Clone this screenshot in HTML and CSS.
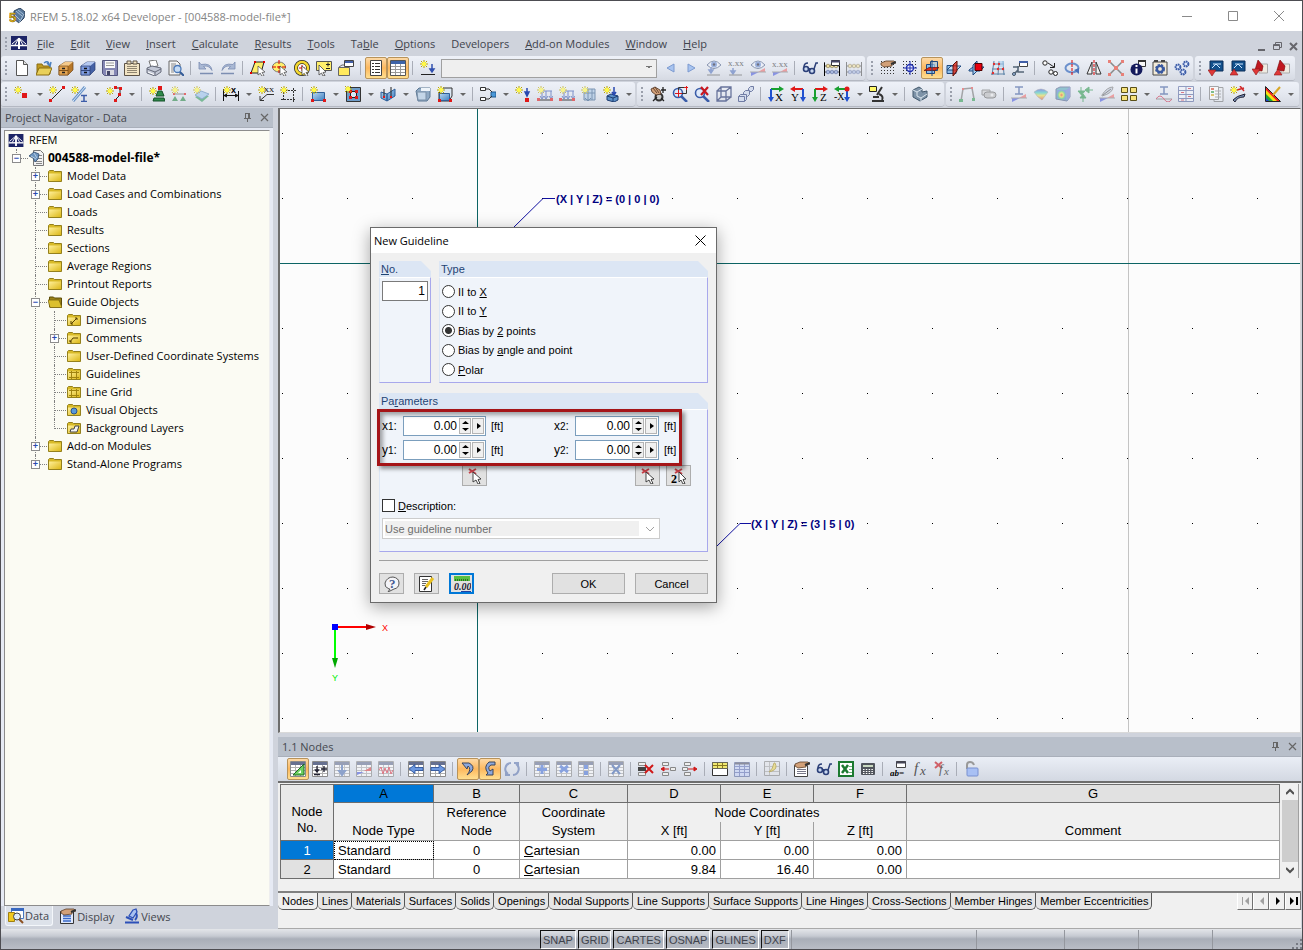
FILE: index.html
```html
<!DOCTYPE html>
<html lang="en">
<head>
  <meta charset="UTF-8">
  <meta name="viewport" content="width=device-width, initial-scale=1.0">
  <title>RFEM 5.18.02 x64 Developer - [004588-model-file*]</title>
  <link rel="stylesheet" href="styles.css">
</head>
<body>
  <svg class="gradients" aria-hidden="true">
    <defs>
      <linearGradient id="gBlue" x1="0" y1="0" x2="1" y2="1"><stop offset="0" stop-color="#b9d8f2"/><stop offset="1" stop-color="#3f7fc0"/></linearGradient>
      <linearGradient id="gFolder" x1="0" y1="0" x2="1" y2="1"><stop offset="0" stop-color="#fff09a"/><stop offset="1" stop-color="#dcb818"/></linearGradient>
      <linearGradient id="gRain" x1="0" y1="0" x2="0" y2="1"><stop offset="0" stop-color="#4a5ad8"/><stop offset=".35" stop-color="#4ccfc0"/><stop offset=".6" stop-color="#e8e050"/><stop offset="1" stop-color="#e85040"/></linearGradient>
      <radialGradient id="gHot"><stop offset="0" stop-color="#f04030"/><stop offset=".4" stop-color="#f0e040"/><stop offset=".75" stop-color="#50c878"/><stop offset="1" stop-color="#5a80d8"/></radialGradient>
    </defs>
  </svg>
  <!-- Icon sprite -->
  <svg class="sprite" aria-hidden="true">
    <symbol id="star" viewBox="0 0 16 16"><path d="M4 0v8M0 4h8M1 1l6 6M7 1L1 7" stroke="#b9a400"/><circle cx="4" cy="4" r="2.300" fill="#fff94a"/></symbol>
    <symbol id="rfem" viewBox="0 0 16 14"><path d="M0 0h16v14H0z" fill="#1c2466"/><path d="M1 8L8 2l7 6M8 2L4 9M8 2l4 7" fill="none" stroke="#fff"/><path d="M0 9.500h16" stroke="#fff" stroke-width="1.500"/><path d="M8 2v11" stroke="#fff" stroke-width="2"/></symbol>
    <symbol id="app" viewBox="0 0 16 16"><path d="M5 3l6-3 5 4-1 6-5 5-5-4z" fill="#58799d" stroke="#2d4360"/><path d="M7 3l6 5M9 2l5 4M5 6l6 6M10 15l5-9" stroke="#a9c1d8"/><text x="0" y="14" font-size="13" font-weight="bold" font-family="Liberation Sans" fill="#f0c020" stroke="#6a5200" stroke-width=".5">5</text></symbol>
    <symbol id="new" viewBox="0 0 16 16"><path d="M2.500.5h7l4 4v11h-11z" fill="#fff" stroke="#555"/><path d="M9.500.5v4h4" fill="#ddd" stroke="#555"/></symbol>
    <symbol id="open" viewBox="0 0 16 16"><path d="M1 4h5l1 2h7v8H1z" fill="#c09a20" stroke="#8a6d10"/><path d="M3 8h13l-3 7H0z" fill="#e9d05a" stroke="#8a6d10"/><path d="M8 3q4-3 5 1M11 3l3 3 1-4" fill="none" stroke="#4a7fc0" stroke-width="1.500"/></symbol>
    <symbol id="cabo" viewBox="0 0 16 16"><path d="M1 6l6-4h8v8l-5 5H1z" fill="#b77728" stroke="#6e4414" stroke-width=".7"/><path d="M1 6h9l5-4H7z" fill="#f4ca8c"/><path d="M1 6h9v4.500H1zM1 10.500h9V15H1z" fill="#e2a452" stroke="#7a4c16" stroke-width=".7"/><path d="M4 8.500h3M4 12.500h3" stroke="#222" stroke-width="1.500"/></symbol>
    <symbol id="cabb" viewBox="0 0 16 16"><path d="M1 6l6-4h8v8l-5 5H1z" fill="#4460a4" stroke="#2a3e74" stroke-width=".7"/><path d="M1 6h9l5-4H7z" fill="#b4c8f0"/><path d="M1 6h9v4.500H1zM1 10.500h9V15H1z" fill="#7c9ade" stroke="#2a3e74" stroke-width=".7"/><path d="M4 8.500h3M4 12.500h3" stroke="#111" stroke-width="1.500"/></symbol>
    <symbol id="save" viewBox="0 0 16 16"><path d="M.5.5h15v15h-13l-2-2z" fill="#8587b4" stroke="#55577f"/><path d="M3 1h10v7H3z" fill="#fafafa"/><path d="M4 3h8M4 5.500h8" stroke="#999"/><path d="M4 10h8v5H4z" fill="#d9d9e2"/><path d="M5 11h3v4H5z" fill="#444668"/></symbol>
    <symbol id="clip" viewBox="0 0 16 16"><path d="M.5 3.500h15v12H.5z" fill="#f2e4c4" stroke="#5c5246"/><path d="M3 1h4v3H3zM9 1h4v3H9z" fill="#f2e4c4" stroke="#5c5246"/><path d="M3 6.500h10M3 8.500h10M3 10.500h10M3 12.500h10" stroke="#8f8470"/></symbol>
    <symbol id="print" viewBox="0 0 16 16"><path d="M3 1l7-1 2 6-7 1z" fill="#fff" stroke="#777"/><path d="M1 8l5-2 9 2v4l-6 4-8-3z" fill="#c3c8d6" stroke="#666b7a"/><path d="M1 9l8 3 6-3M9 12v3" fill="none" stroke="#666b7a"/><path d="M2 12l6 2.500" stroke="#fff"/></symbol>
    <symbol id="preview" viewBox="0 0 16 16"><path d="M1 1h8l3 3v11H1z" fill="#f6f6f6" stroke="#666"/><path d="M3 4h5M3 6h7M3 8h4M3 10h3M3 12h3" stroke="#888"/><circle cx="9.500" cy="9" r="3.500" fill="#c6dcf5" stroke="#4a78b8" stroke-width="1.300"/><path d="M12 12l4 4" stroke="#345c98" stroke-width="2"/></symbol>
    <symbol id="undo" viewBox="0 0 16 16"><path d="M1 2v7h7L5.500 6.500q5-2 8.500 4-1-8-11-6z" fill="#a9b8d4" stroke="#7c8eb2" stroke-width=".8"/><path d="M2 13.500h13" stroke="#7c8eb2" stroke-width="1.500"/></symbol>
    <symbol id="redo" viewBox="0 0 16 16"><path d="M15 2v7H8l2.500-2.500q-5-2-8.500 4 1-8 11-6z" fill="#a9b8d4" stroke="#7c8eb2" stroke-width=".8"/><path d="M1 13.500h13" stroke="#7c8eb2" stroke-width="1.500"/></symbol>
    <symbol id="cursor" viewBox="0 0 16 16"><path d="M8 6l7 6-3 .5 2 3-2 .8-1.700-3L8 15z" fill="#fff" stroke="#444" stroke-width=".7"/></symbol>
    <symbol id="selpoly" viewBox="0 0 16 16"><path d="M5 2h9l-3 11H1z" fill="#ffef6a" stroke="#222"/><path d="M4 1h2v2H4zM13 1h2v2h-2zM0 12h2v2H0z" fill="#e00000"/><use href="#cursor"/></symbol>
    <symbol id="selell" viewBox="0 0 16 16"><ellipse cx="7" cy="7" rx="6.500" ry="5" fill="#ffef6a" stroke="#777"/><path d="M7 0v4M7 6v3M0 7h4M5 7h4M10 7h4M7 10v3" stroke="#e00000"/><use href="#cursor"/></symbol>
    <symbol id="selring" viewBox="0 0 16 16"><circle cx="8" cy="8" r="6" fill="#fff" stroke="#222" stroke-width="4"/><circle cx="8" cy="8" r="6" fill="none" stroke="#f5d930" stroke-width="2.500"/><path d="M8 5v6M5 8h6" stroke="#e00000"/><use href="#cursor"/></symbol>
    <symbol id="selrect" viewBox="0 0 16 16"><path d="M.5 1.500h15v9H.5z" fill="#ffef6a" stroke="#555"/><path d="M10 4.500h4M12 2.500v4M10 8.500h4" stroke="#222"/><path d="M3 5l7 7-3 .5 2 3-2 .5-1.500-3L3 15z" fill="#fff" stroke="#444" stroke-width=".8"/></symbol>
    <symbol id="selwin" viewBox="0 0 16 16"><path d="M.5 7.500h11v8H.5z" fill="#ffe95e" stroke="#666"/><path d="M1 7l3-2h3" stroke="#666" fill="none"/><path d="M6.500.5h9v6h-9z" fill="#fff" stroke="#444"/><path d="M7 2h8" stroke="#4260a8" stroke-width="2"/></symbol>
    <symbol id="list" viewBox="0 0 16 16"><path d="M2.500.5h11v15h-11z" fill="#fff" stroke="#444"/><path d="M4 3.500h2M4 6.500h2M4 9.500h2M4 12.500h2M7 3.500h5M7 6.500h5M7 9.500h5M7 12.500h5" stroke="#333"/></symbol>
    <symbol id="table" viewBox="0 0 16 16"><path d="M.5.5h15v15H.5z" fill="#fff" stroke="#555"/><path d="M1 1h14v3H1z" fill="#3d63a8"/><path d="M1 6.500h14M1 9.500h14M1 12.500h14M5.500 4v11M10.500 4v11" stroke="#999"/></symbol>
    <symbol id="starload" viewBox="0 0 16 16"><use href="#star"/><path d="M12 4v7M10 9l2 3 2-3z" stroke="#3050b0" stroke-width="1.500" fill="#3050b0"/><path d="M1 14.500h14" stroke="#222"/></symbol>
    <symbol id="prev" viewBox="0 0 16 16"><path d="M12 4v8L5 8z" fill="#a8c4f0" stroke="#7c9ad0"/></symbol>
    <symbol id="next" viewBox="0 0 16 16"><path d="M4 4v8l7-4z" fill="#a8c4f0" stroke="#7c9ad0"/></symbol>
    <symbol id="eye" viewBox="0 0 16 16"><path d="M1 5q7-8 14 0-7 7-14 0z" fill="#eef2fa" stroke="#4c5e84"/><circle cx="8" cy="4.500" r="3" fill="#6a8cd0"/><circle cx="8" cy="4.500" r="1.200" fill="#223"/></symbol>
    <symbol id="eyeload" viewBox="0 0 16 16"><use href="#eye"/><path d="M5 7v5M3 10l2 3 2-3z" fill="#5a78c0" stroke="#5a78c0" stroke-width="1.500"/><path d="M1 15h13" stroke="#666"/></symbol>
    <symbol id="diag" viewBox="0 0 16 16"><path d="M1 16v-4h8z" fill="#5060e0"/><path d="M8 12l7-4v4z" fill="#f07070"/><path d="M0 12h16" stroke="#888"/></symbol>
    <symbol id="eyediag" viewBox="0 0 16 16"><use href="#eye"/><use href="#diag"/></symbol>
    <symbol id="xxload" viewBox="0 0 16 16"><text x="0" y="6" font-size="9" fill="#333" font-family="Liberation Serif">x.xx</text><path d="M5 8v5M3 11l2 3 2-3z" fill="#5a78c0" stroke="#5a78c0" stroke-width="1.500"/><path d="M1 15h13" stroke="#666"/></symbol>
    <symbol id="xxdiag" viewBox="0 0 16 16"><text x="0" y="7" font-size="9" fill="#333" font-family="Liberation Serif">x.xx</text><use href="#diag"/></symbol>
    <symbol id="glasses" viewBox="0 0 16 16"><circle cx="4" cy="9" r="2.500" fill="#c9d8f0" stroke="#2b3f78" stroke-width="1.600"/><circle cx="10" cy="11" r="2.500" fill="#c9d8f0" stroke="#2b3f78" stroke-width="1.600"/><path d="M2 7q0-4 4-4M6 9q2-1 2 1M12 9l2-6 2 0" fill="none" stroke="#2b3f78" stroke-width="1.500"/></symbol>
    <symbol id="abacus" viewBox="0 0 16 16"><path d="M.5 2v14M15.500 2v14M1 6h14M1 12h14" stroke="#555"/><g fill="#a8b8e0" stroke="#5a6ca0" stroke-width=".6"><circle cx="4" cy="12" r="1.800"/><circle cx="8" cy="12" r="1.800"/><circle cx="12" cy="12" r="1.800"/></g><g fill="#f0e0a0" stroke="#807040" stroke-width=".6"><circle cx="4" cy="6" r="1.800"/><circle cx="8" cy="6" r="1.800"/><circle cx="12" cy="6" r="1.800"/></g></symbol>
    <symbol id="abacuswin" viewBox="0 0 16 16"><use href="#abacus"/><path d="M.5 3v13M15.500 6v10" stroke="#000"/><path d="M7.500.5h8v5h-8z" fill="#fff" stroke="#333"/><path d="M7 1.500h9" stroke="#446" stroke-width="2"/></symbol>
    <symbol id="dots" viewBox="0 0 16 16"><path d="M1 1.500h15M1 4.500h15M1 7.500h15M1 10.500h15M1 13.500h15" stroke="#333" stroke-dasharray="1 2"/></symbol>
    <symbol id="hand" viewBox="0 0 16 16"><path d="M1 3l5-2 8 0 2 2-4 1 0 2-8 1-3-2z" fill="#d2a078" stroke="#5c3c24" stroke-width=".8"/><path d="M11 4l5-2" stroke="#333" stroke-width="2"/></symbol>
    <symbol id="handgrid" viewBox="0 0 16 16"><use href="#dots"/><use href="#hand"/></symbol>
    <symbol id="snap" viewBox="0 0 16 16"><use href="#dots"/><circle cx="8" cy="8" r="3.500" fill="#eef" stroke="#2030b0" stroke-width="1.400"/><path d="M8 1v14M1 8h14" stroke="#2030b0"/></symbol>
    <symbol id="wpa" viewBox="0 0 16 16"><path d="M2.500 4.500h8v9h-8z" fill="#8cbce8" stroke="#1f4a80"/><path d="M6.500 1.500h7v9h-7z" fill="#a8d0f0" fill-opacity=".7" stroke="#1f4a80"/><path d="M0 10.500l5-3h10l-4 3z" fill="#e02818" stroke="#601008" stroke-width=".7"/><path d="M8 0v16" stroke="#1f4a80"/></symbol>
    <symbol id="wpb" viewBox="0 0 16 16"><path d="M1 5.500h9v8H1z" fill="#8cbce8" stroke="#1f4a80"/><path d="M1 10l4-4h10l-4 4z" fill="#c8e2f8" stroke="#1f4a80"/><path d="M7 5l4-4v10l-4 5z" fill="#e02818" fill-opacity=".8" stroke="#601008"/></symbol>
    <symbol id="wpc" viewBox="0 0 16 16"><path d="M1 10l4-3h11l-4 4H1z" fill="#8cbce8" stroke="#1f4a80"/><path d="M5 5l4-4v10l-4 4z" fill="#a8d0f0" stroke="#1f4a80"/><path d="M7 3.500h7v7H7z" fill="#e80010" stroke="#500"/></symbol>
    <symbol id="redgrid" viewBox="0 0 16 16"><path d="M4 1L2 15M9 1L8 15M13 1l1 14M3 4h11M2 9h12M1 14h14" stroke="#5c84a8"/><path d="M8 1h6v6H8z" fill="#a8d0f0" opacity=".6"/><g fill="#e03030"><circle cx="4" cy="4" r="1.200"/><circle cx="9" cy="4" r="1.200"/><circle cx="8" cy="9" r="1.200"/><circle cx="13" cy="9" r="1.200"/><circle cx="3" cy="13" r="1.200"/></g></symbol>
    <symbol id="wrench" viewBox="0 0 16 16"><path d="M1 15l5-5M1 7h6M6 6v6h6" stroke="#567" fill="none" stroke-width="1.600"/><circle cx="2" cy="14" r="1.500" fill="#9ab4dc" stroke="#456"/><path d="M7.500 1.500h8v5h-8z" fill="#fff" stroke="#444"/><path d="M7 2h9" stroke="#4260a8" stroke-width="2"/></symbol>
    <symbol id="movenode" viewBox="0 0 16 16"><circle cx="3" cy="3" r="2.200" fill="#fff" stroke="#222"/><circle cx="9" cy="12" r="2.200" fill="#fff" stroke="#222"/><circle cx="13.500" cy="13.500" r="2" fill="#fff" stroke="#222"/><path d="M6 3l6 4M8 7.500h4.500V3" fill="none" stroke="#222"/></symbol>
    <symbol id="rotate" viewBox="0 0 16 16"><ellipse cx="8" cy="8" rx="6.500" ry="4.500" fill="none" stroke="#6b90cc" stroke-width="2"/><path d="M10 10l5 4 0-6z" fill="#4a70b8"/><path d="M8 0v16" stroke="#e00000" stroke-dasharray="3 1"/></symbol>
    <symbol id="mirror" viewBox="0 0 16 16"><path d="M6 2v12H1zM10 2v12h5z" fill="#f2f2f2" stroke="#333"/><path d="M8 0v16" stroke="#e00000" stroke-dasharray="3 1"/></symbol>
    <symbol id="scale" viewBox="0 0 16 16"><path d="M1 1l14 14M15 1L1 15" stroke="#888" stroke-width="1.500"/><path d="M0 0h3v3H0zM13 0h3v3h-3zM0 13h3v3H0zM13 13h3v3h-3zM6 6h4v4H6z" fill="#e88078"/></symbol>
    <symbol id="info" viewBox="0 0 16 16"><path d="M8.500.5h7v6h-7z" fill="#f8f8f8" stroke="#333"/><path d="M8 1h8" stroke="#333" stroke-width="2"/><circle cx="6.500" cy="9.500" r="6" fill="#141a5c"/><path d="M6.500 5v2M6.500 8.500v5" stroke="#fff" stroke-width="2"/></symbol>
    <symbol id="gearwin" viewBox="0 0 16 16"><path d="M1 2h14v13H1z" fill="#f2ead8" stroke="#444"/><path d="M2 1h4M9 1h4" stroke="#444" stroke-width="2"/><circle cx="8" cy="9" r="3.500" fill="none" stroke="#3858a0" stroke-width="3" stroke-dasharray="2 .8"/><circle cx="8" cy="9" r="3" fill="none" stroke="#3858a0" stroke-width="2"/></symbol>
    <symbol id="gears" viewBox="0 0 16 16"><g fill="#dfe8fa" stroke="#3c5ca8" stroke-width="2"><circle cx="4" cy="7" r="2.400" stroke-dasharray="1.500 .5"/><circle cx="12" cy="4" r="2.400" stroke-dasharray="1.500 .5"/><circle cx="9" cy="12" r="2.400" stroke-dasharray="1.500 .5"/></g></symbol>
    <symbol id="picdown" viewBox="0 0 16 16"><path d="M2 1h13v10H2z" fill="#12508c" stroke="#0a2c58"/><path d="M4 8l4-4 4 4M5 4h8" stroke="#cfe6ff" fill="none"/><path d="M0 10h8l-4 6z" fill="#e03838" stroke="#8c1818" stroke-width=".6"/></symbol>
    <symbol id="picup" viewBox="0 0 16 16"><path d="M2 1h13v10H2z" fill="#12508c" stroke="#0a2c58"/><path d="M4 8l4-4 4 4M5 4h8" stroke="#cfe6ff" fill="none"/><path d="M0 15h8l-4-6z" fill="#e03838" stroke="#8c1818" stroke-width=".6"/></symbol>
    <symbol id="pdfdown" viewBox="0 0 16 16"><path d="M7 4h8.500v9H7z" fill="#efebe2" stroke="#aaa"/><path d="M6 0l5 6-1 5-7-1z" fill="#c01820" stroke="#700" stroke-width=".6"/><path d="M0 9h8l-4 6z" fill="#e03838" stroke="#8c1818" stroke-width=".6"/></symbol>
    <symbol id="pdfup" viewBox="0 0 16 16"><path d="M7 4h8.500v9H7z" fill="#efebe2" stroke="#aaa"/><path d="M6 0l5 6-1 5-7-1z" fill="#c01820" stroke="#700" stroke-width=".6"/><path d="M0 15h8l-4-6z" fill="#e03838" stroke="#8c1818" stroke-width=".6"/></symbol>
    <symbol id="stnode" viewBox="0 0 16 16"><use href="#star"/><path d="M8 7h5v5H8z" fill="#e01818"/></symbol>
    <symbol id="stline" viewBox="0 0 16 16"><use href="#star"/><path d="M2 14L14 2" stroke="#222"/><path d="M0 13h3v3H0zM13 0h3v3h-3z" fill="#e01818"/></symbol>
    <symbol id="stmember" viewBox="0 0 16 16"><path d="M2 15L14 1" stroke="#6a94c8" stroke-width="3"/><path d="M2 15L14 1" stroke="#d8e8f8"/><use href="#star"/><path d="M10 9.500h6M10 15.500h6M13 9v6" stroke="#3c5ca8" stroke-width="1.500"/></symbol>
    <symbol id="stpoly" viewBox="0 0 16 16"><path d="M9 2h5v7l-5 5" stroke="#222" fill="none"/><use href="#star" y="1"/><path d="M8 0h3v3H8zM13 1h3v3h-3zM12 7h3v3h-3zM8 13h3v3H8z" fill="#e01818"/></symbol>
    <symbol id="stsup" viewBox="0 0 16 16"><use href="#star" y="1"/><path d="M9 0h4v4H9z" fill="#e01818"/><path d="M9 5h4l2 5H7zM5 12h10l1 3H4z" fill="#2e8a4a" stroke="#155028"/></symbol>
    <symbol id="stsups" viewBox="0 0 16 16"><path d="M3 8h12" stroke="#666"/><path d="M2 7h2v2H2zM13 7h2v2h-2z" fill="#e01818"/><path d="M4 10l3 5H1zM12 10l3 5H9z" fill="#2e8a4a"/><use href="#star"/></symbol>
    <symbol id="stfound" viewBox="0 0 16 16"><path d="M2 11l6-3 8 2-7 6z" fill="#38a060"/><path d="M2 9l6-4 8 3-7 5z" fill="#9cc4ec" stroke="#5a88b8"/><use href="#star"/></symbol>
    <symbol id="dim" viewBox="0 0 16 16"><path d="M.5 3v12M15.500 5v10M1 9.500h14M4 8L1 9.500 4 11M12 8l3 1.500-3 1.500" stroke="#111" fill="#111"/><use href="#star"/><text x="8" y="7" font-size="9" font-weight="bold" font-family="Liberation Sans">x</text></symbol>
    <symbol id="xxnote" viewBox="0 0 16 16"><use href="#star"/><text x="6" y="6" font-size="7" font-family="Liberation Serif">XX</text><path d="M16 8.500H9l-7 6M2 10v4.500h4" stroke="#333" fill="none"/></symbol>
    <symbol id="stgrid" viewBox="0 0 16 16"><path d="M3.500 3v12M13.500 2v14M2 4.500h14M1 13.500h14" stroke="#333" stroke-dasharray="2 1"/><use href="#star"/></symbol>
    <symbol id="stsurf" viewBox="0 0 16 16"><path d="M2.500 6.500h12v8h-12z" fill="url(#gBlue)" stroke="#2f5f98"/><path d="M1 13h3v3H1zM13 13h3v3h-3z" fill="#e01818"/><use href="#star"/></symbol>
    <symbol id="stopening" viewBox="0 0 16 16"><path d="M1.500 1.500h14v14h-14z" fill="#6e9cc8" stroke="#333"/><path d="M5.500 5.500h6v6h-6z" fill="#d8e8f4" stroke="#222"/><path d="M4 4h3v3H4zM10 4h3v3h-3zM4 10h3v3H4zM10 10h3v3h-3z" fill="#e01818"/><use href="#star" x="-1" y="-1"/></symbol>
    <symbol id="intersect" viewBox="0 0 16 16"><path d="M1 6l6 2v7l-6-3zM7 8l8-5v7l-8 5z" fill="url(#gBlue)" stroke="#2f5f98"/><path d="M4 3v9M11 1v10" stroke="#222"/><path d="M3 10h2v2H3zM10 10h2v2h-2z" fill="#e01818"/></symbol>
    <symbol id="solid" viewBox="0 0 16 16"><path d="M1 5l3-3h11v9l-3 4H3z" fill="#8fa9c4" stroke="#5c7894"/><path d="M7 4l8 0M2 6h9v8H3z" fill="#c4d6e8" stroke="#7a90a8"/><path d="M6 2l9 0v3H6z" fill="#eef4fa"/></symbol>
    <symbol id="stsolid" viewBox="0 0 16 16"><path d="M2 7l4-5h9v8l-3 5H2z" fill="#dce8f4" stroke="#333"/><path d="M2.500 7.500h10v7h-10z" fill="url(#gBlue)" stroke="#2f5f98"/><path d="M1 13h3v3H1zM12 13h3v3h-3z" fill="#e01818"/><use href="#star"/></symbol>
    <symbol id="connect" viewBox="0 0 16 16"><path d="M.5 1.500h5v3h-5zM.5 11.500h5v3h-5z" fill="#fff" stroke="#333"/><path d="M11 6h5v5h-5z" fill="#4a98d8" stroke="#205a90"/><path d="M6 3h3l3 3M6 13h3l3-3" fill="none" stroke="#333"/></symbol>
    <symbol id="stnload" viewBox="0 0 16 16"><use href="#star"/><path d="M12 2v6M10 6l2 4 2-4z" fill="#2848b0" stroke="#2848b0" stroke-width="1.500"/><path d="M10 12h4v4h-4z" fill="#e01818"/></symbol>
    <symbol id="stmload" viewBox="0 0 16 16"><path d="M4 5h11M5 5v7M9 5v7M14 5v7M3 10l2 3 2-3M7 10l2 3 2-3M12 10l2 3 2-3" fill="none" stroke="#3858b0"/><path d="M1 14h14" stroke="#333" stroke-width="1.500"/><path d="M0 12h3v3H0zM13 12h3v3h-3z" fill="#e01818"/><use href="#star"/></symbol>
    <symbol id="stsload" viewBox="0 0 16 16"><path d="M3 3h11v11H3z" fill="#a9c6e4" stroke="#38608c"/><path d="M3 7h11M7 3v11M11 3v11M4 12l3 3 3-3" fill="none" stroke="#38608c"/><use href="#star"/></symbol>
    <symbol id="stvload" viewBox="0 0 16 16"><path d="M4 10l4-2 7 2v4l-4 2-7-2z" fill="#5c90c8" stroke="#1c3c70"/><path d="M4 10l6 2 5-2M10 12v4" fill="none" stroke="#1c3c70"/><path d="M11 1v7M9 6l2 3 2-3" stroke="#2848b0" stroke-width="1.500" fill="none"/><use href="#star"/></symbol>
    <symbol id="handgear" viewBox="0 0 16 16"><circle cx="9" cy="11" r="3.500" fill="#ccc" stroke="#333" stroke-width="2"/><path d="M11 4h5M13 1v6M3 15l4-4M14 15l-3-3" stroke="#222" stroke-width="1.300"/><path d="M1 3l4-2 5 3 1 4-5 1-4-3z" fill="#d2a078" stroke="#4c3020" stroke-width=".8"/><path d="M3 2l4 5M5 1l4 6" stroke="#4c3020" stroke-width=".8"/></symbol>
    <symbol id="mag" viewBox="0 0 16 16"><circle cx="6" cy="7" r="4.500" fill="#dfeafa" stroke="#3a5ca8" stroke-width="1.600"/><path d="M9 10l6 6" stroke="#3a5ca8" stroke-width="2.500"/></symbol>
    <symbol id="zoomwin" viewBox="0 0 16 16"><use href="#mag"/><path d="M6.500 1.500h8v6h-8z" fill="none" stroke="#333"/><path d="M6.500 4v7M3 7.500h7M14.500 0v4M12 1.500h4" stroke="#e01818"/></symbol>
    <symbol id="zoomx" viewBox="0 0 16 16"><use href="#mag"/><path d="M7 1l7 8M14 1L7 9" stroke="#c81820" stroke-width="2.200"/></symbol>
    <symbol id="cube" viewBox="0 0 16 16"><path d="M1 5h9v10H1zM5 1h10v10H5zM1 5l4-4M10 5l5-4M10 15l5-4M1 15l4-4" fill="none" stroke="#68749c" stroke-width="1.300"/></symbol>
    <symbol id="cubes" viewBox="0 0 16 16"><g fill="#d4dced" stroke="#707ca4"><path d="M10.500 2.500l2-2h3v3l-2 2h-3z"/><path d="M5.500 6.500l2-2h4v4l-2 2h-4z"/><path d="M.5 10.500l2-2h6v5l-2 2h-6z"/><path d="M.5 10.500h6v5" fill="none"/></g></symbol>
    <symbol id="vx" viewBox="0 0 16 16"><path d="M3 3h9" stroke="#18a030" stroke-width="2"/><path d="M11 0l5 3-5 3z" fill="#18a030"/><path d="M3 3v9" stroke="#2050d0" stroke-width="2"/><path d="M0 11l3 5 3-5z" fill="#2050d0"/><text x="7" y="15" font-size="11" font-family="Liberation Serif">X</text></symbol>
    <symbol id="vy" viewBox="0 0 16 16"><path d="M4 3h9" stroke="#e01818" stroke-width="2"/><path d="M5 0L0 3l5 3z" fill="#e01818"/><path d="M13 3v9" stroke="#2050d0" stroke-width="2"/><path d="M10 11l3 5 3-5z" fill="#2050d0"/><text x="1" y="15" font-size="11" font-family="Liberation Serif">Y</text></symbol>
    <symbol id="vz" viewBox="0 0 16 16"><path d="M3 3h9" stroke="#e01818" stroke-width="2"/><path d="M11 0l5 3-5 3z" fill="#e01818"/><path d="M3 3v9" stroke="#18a030" stroke-width="2"/><path d="M0 11l3 5 3-5z" fill="#18a030"/><text x="8" y="15" font-size="11" font-family="Liberation Serif">Z</text></symbol>
    <symbol id="vmx" viewBox="0 0 16 16"><path d="M4 3h9" stroke="#18a030" stroke-width="2"/><path d="M5 0L0 3l5 3z" fill="#18a030"/><path d="M13 3v9" stroke="#2050d0" stroke-width="2"/><path d="M10 11l3 5 3-5z" fill="#2050d0"/><circle cx="13" cy="3" r="2.500" fill="#e01818"/><text x="0" y="14" font-size="10" font-family="Liberation Serif">-X</text></symbol>
    <symbol id="micro" viewBox="0 0 16 16"><path d="M.5.5h7v5h-7z" fill="#fff868" stroke="#222"/><path d="M13 1l-5 8M10 8q5 2 3 6M3 15h12M4 11h6" stroke="#333" stroke-width="2" fill="none"/></symbol>
    <symbol id="block" viewBox="0 0 16 16"><path d="M1 4l6-3 3 2v3l5-1v6l-7 4-7-4z" fill="#7e93a8" stroke="#42586c"/><path d="M1 4l4 2v4l4 2 6-4M5 6l5-3M9 12v3" fill="none" stroke="#dce6ee"/></symbol>
    <symbol id="frame" viewBox="0 0 16 16"><path d="M2 15L4 3l9-1 2 11" fill="none" stroke="#777" stroke-width="1.500"/><path d="M3 2h2v2H3zM12 1h2v2h-2z" fill="#e05050"/><path d="M0 13h4v3H0zM13 12h3v3h-3z" fill="#38a058"/></symbol>
    <symbol id="cam" viewBox="0 0 16 16"><path d="M1 4h8v5H1z" fill="#d0d0d0" stroke="#777"/><rect x="3" y="6" width="12" height="6" rx="3" fill="#bbb" stroke="#666"/><circle cx="11" cy="9" r="1.500" fill="#eee"/></symbol>
    <symbol id="ibeam" viewBox="0 0 16 16"><path d="M4 1h8M4 8h8M8 1v7" stroke="#4460a0" stroke-width="1.500"/><use href="#diag"/></symbol>
    <symbol id="contour" viewBox="0 0 16 16"><path d="M1 6q7-6 14 0l-6 8q-5-3-8-8z" fill="url(#gRain)" stroke="#888" stroke-width=".5"/></symbol>
    <symbol id="contcube" viewBox="0 0 16 16"><path d="M1 3l4-2h10v10l-3 4-11-2z" fill="#58a8b8" stroke="#50608c"/><path d="M2 4h9v10l-9-2z" fill="url(#gHot)"/><path d="M11 4l4-3v10l-3 4z" fill="#6c80d0"/></symbol>
    <symbol id="garrows" viewBox="0 0 16 16"><path d="M4 1v5M1 5h7l-3.500 4zM11 4h5M12 1L8 4l4 3zM6 16v-4M3 12l3-4 3 4z" fill="#309850" stroke="#309850"/></symbol>
    <symbol id="wedge" viewBox="0 0 16 16"><path d="M3 9Q8 1 14 1q0 6-11 9z" fill="#c4ccdc" stroke="#777"/><path d="M4 9l8-6" stroke="#555"/><use href="#diag"/></symbol>
    <symbol id="four" viewBox="0 0 16 16"><path d="M.5 1.500h6v5h-6zM9.500 1.500h6v5h-6zM.5 9.500h6v5h-6zM9.500 9.500h6v5h-6z" fill="#f6e27c" stroke="#5a5018"/></symbol>
    <symbol id="isin" viewBox="0 0 16 16"><path d="M4 1h8M4 8h8M8 1v7" stroke="#4460a0" stroke-width="1.500"/><path d="M0 13h16" stroke="#777"/><path d="M0 13q4-6 8 0t8 0" fill="none" stroke="#d03050"/></symbol>
    <symbol id="tables" viewBox="0 0 16 16"><path d="M.5.5h15v15H.5z" fill="#f2f4fa" stroke="#5868a0"/><path d="M1 4.500h14M1 8.500h14M1 12.500h14M8 1v14" stroke="#5868a0"/><path d="M3 6.500h3M10 10.500h3M3 14h3M10 2.500h3" stroke="#d03040"/></symbol>
    <symbol id="report" viewBox="0 0 16 16"><path d="M6 1.500h9v14H6z" fill="#e8ecf2" stroke="#777"/><path d="M1.500.5h9v13h-9z" fill="#fff" stroke="#777"/><path d="M3 3h3" stroke="#e04828" stroke-width="2"/><path d="M3 6h3" stroke="#38a048" stroke-width="2"/><path d="M3 9h3" stroke="#e0b020" stroke-width="2"/><path d="M7 5h6M7 8h6M7 11h6" stroke="#888"/></symbol>
    <symbol id="wand" viewBox="0 0 16 16"><path d="M3 14q3-4 12-6l-1 3q-7 0-9 5z" fill="#7890b8" stroke="#223"/><path d="M7 4l7-2M10 0l4 5" stroke="#d02828" stroke-width="1.500"/><use href="#star"/></symbol>
    <symbol id="colors" viewBox="0 0 16 16"><path d="M1 1l14 14H1z" fill="#f02020"/><path d="M1 4l11 11H1z" fill="#f8e010"/><path d="M1 8l7 7H1z" fill="#20a838"/><path d="M1 12l3 3H1z" fill="#2040d0"/><path d="M.5.5v15h15z" fill="none" stroke="#222"/><path d="M15 1l-7 8" stroke="#d8a828" stroke-width="2"/></symbol>
    <!-- table panel -->
    <symbol id="grid" viewBox="0 0 16 16"><path d="M.5.5h15v15H.5z" fill="#fff" stroke="#8a8a8a"/><path d="M1 6.500h14M1 9.500h14M1 12.500h14M5.500 4v11M10.500 4v11" stroke="#b0b0b0"/><path d="M1 1h14v3H1z" fill="#667090"/></symbol>
    <symbol id="gtri" viewBox="0 0 16 16"><use href="#grid"/><path d="M3 14L14 3v11z" fill="#6ed060" stroke="#1c6a20"/><path d="M8 12l3-3v3z" fill="#fff"/></symbol>
    <symbol id="gadd" viewBox="0 0 16 16"><use href="#grid"/><path d="M5 5v6M3.500 9L5 11l1.500-2zM2 13.500h6M9 8h6M12 5v6" fill="#223" stroke="#223" stroke-width="1.300"/></symbol>
    <symbol id="gdown" viewBox="0 0 16 16"><use href="#grid"/><path d="M8 4v6M5 10l3 4 3-4z" fill="#5a7ab8" stroke="#5a7ab8" stroke-width="2"/></symbol>
    <symbol id="gdiag" viewBox="0 0 16 16"><use href="#grid"/><path d="M1 11h7l-7 3z" fill="#5060e0"/><path d="M8 10l7-4v4z" fill="#e04848"/></symbol>
    <symbol id="gwave" viewBox="0 0 16 16"><use href="#grid"/><path d="M1 9l2-3 2 7 2-6 2 5 2-6 2 7 2-4" fill="none" stroke="#e03040"/></symbol>
    <symbol id="gleft" viewBox="0 0 16 16"><use href="#grid"/><path d="M15 6.500H7v-3L1 8l6 4.500v-3h8z" fill="#6c98e0" stroke="#244c98" stroke-width=".8"/></symbol>
    <symbol id="gright" viewBox="0 0 16 16"><use href="#grid"/><path d="M1 6.500h8v-3L15 8l-6 4.500v-3H1z" fill="#6c98e0" stroke="#244c98" stroke-width=".8"/></symbol>
    <symbol id="retr" viewBox="0 0 16 16"><path d="M2 2h7q6 3 3 8l-5 4q5-6 1-9l-1 3z" fill="#8ca8dc" stroke="#3c4458"/></symbol>
    <symbol id="retl" viewBox="0 0 16 16"><path d="M13 1H7Q1 6 6 12l-2 2h7V8L8 10Q5 6 9 4h4z" fill="#8ca8dc" stroke="#3c4458"/></symbol>
    <symbol id="sync" viewBox="0 0 16 16"><path d="M7 2a6 6 0 0 0-3 11M9 14a6 6 0 0 0 3-11M2 10v4h4M14 6V2h-4" fill="none" stroke="#6078b0" stroke-width="2"/></symbol>
    <symbol id="gplus" viewBox="0 0 16 16"><use href="#grid"/><path d="M3 8.500h10M8 4v9" stroke="#5078d8" stroke-width="3"/></symbol>
    <symbol id="gmul" viewBox="0 0 16 16"><use href="#grid"/><path d="M4 5l8 6M12 5l-8 6" stroke="#5078d8" stroke-width="3"/></symbol>
    <symbol id="gdiv" viewBox="0 0 16 16"><use href="#grid"/><path d="M8 4v4M8 10v4" stroke="#5078d8" stroke-width="4"/></symbol>
    <symbol id="gx" viewBox="0 0 16 16"><use href="#grid"/><path d="M4 4l8 9M12 4l-8 9" stroke="#4468b0" stroke-width="2"/></symbol>
    <symbol id="rowx" viewBox="0 0 16 16"><path d="M.5 1.500h7v3h-7zM.5 11.500h7v3h-7z" fill="#eee" stroke="#888"/><path d="M0 8h8" stroke="#444" stroke-width="4"/><path d="M7 4l8 8M15 4l-8 8" stroke="#d01818" stroke-width="2"/></symbol>
    <symbol id="rowl" viewBox="0 0 16 16"><path d="M2.500 1.500h6v3h-6zM2.500 11.500h6v3h-6zM10.500 6.500h5v3h-5z" fill="#eee" stroke="#888"/><path d="M9 8H3M4 6L1 8l3 2z" fill="#d01818" stroke="#d01818"/></symbol>
    <symbol id="rowr" viewBox="0 0 16 16"><path d="M2.500 1.500h6v3h-6zM2.500 11.500h6v3h-6zM.5 6.500h5v3h-5z" fill="#eee" stroke="#888"/><path d="M6 8h7M12 6l3 2-3 2z" fill="#d01818" stroke="#d01818"/></symbol>
    <symbol id="ytab" viewBox="0 0 16 16"><path d="M.5 1.500h15v13H.5z" fill="#fff" stroke="#333"/><path d="M.5 1.500h15v6H.5z" fill="#f0e870" stroke="#665"/><path d="M1 4.500h14M5.500 2v5M10.500 2v5" stroke="#887820"/></symbol>
    <symbol id="btab" viewBox="0 0 16 16"><path d="M.5 1.500h15v14H.5z" fill="#c8d4f8" stroke="#5c6ca0"/><path d="M1 5.500h14M1 8.500h14M1 11.500h14M5.500 2v13M10.500 2v13" stroke="#6474b8"/><path d="M1 2.500h14" stroke="#556" stroke-width="2"/></symbol>
    <symbol id="note" viewBox="0 0 16 16"><path d="M.5.5h15v14H.5z" fill="#e4e6ea" stroke="#888"/><path d="M5.500 1v13M1 5.500h14M1 10.500h14" stroke="#aaa"/><path d="M11 2q3 6-3 8l-3 1q4-3 5-9z" fill="#ecd858" stroke="#a89020"/></symbol>
    <symbol id="handlist" viewBox="0 0 16 16"><path d="M.5 4.500h13v11H.5z" fill="#fff" stroke="#444"/><path d="M3 8.500h9M3 10.500h9M3 12.500h9" stroke="#778"/><use href="#hand"/></symbol>
    <symbol id="excel" viewBox="0 0 16 16"><path d="M1 1h14v14H1z" fill="#fff" stroke="#1c7a30" stroke-width="2"/><path d="M4 4l6 8M10 4l-6 8" stroke="#1c7a30" stroke-width="2.500"/><path d="M11 5.500h3M11 8.500h3M11 11.500h3" stroke="#6cb078"/></symbol>
    <symbol id="calc" viewBox="0 0 16 16"><rect x="1" y="2" width="14" height="12" rx="1" fill="#50545c"/><path d="M3 4h10v2H3z" fill="#c8d8c0"/><path d="M3 8.500h10M3 10.500h10M3 12.500h10" stroke="#fff" stroke-dasharray="1.500 1.300"/></symbol>
    <symbol id="abeq" viewBox="0 0 16 16"><path d="M6.500.5h9v6h-9z" fill="#fff" stroke="#444"/><path d="M6 1.500h10" stroke="#445" stroke-width="2"/><text x="0" y="15" font-size="9" font-style="italic" font-weight="bold" font-family="Liberation Serif">ab=</text></symbol>
    <symbol id="fx" viewBox="0 0 16 16"><text x="2" y="12" font-size="15" font-style="italic" font-family="Liberation Serif" fill="#555">f</text><text x="8" y="14" font-size="13" font-style="italic" font-family="Liberation Serif" fill="#555">x</text></symbol>
    <symbol id="fxx" viewBox="0 0 16 16"><path d="M1 1l7 6M8 1L1 7" stroke="#d06068" stroke-width="2"/><text x="5" y="12" font-size="13" font-style="italic" font-family="Liberation Serif" fill="#666">f</text><text x="10" y="14" font-size="11" font-style="italic" font-family="Liberation Serif" fill="#666">x</text></symbol>
    <symbol id="lock" viewBox="0 0 16 16"><path d="M3 8V4q0-3 3-3t4 3" fill="none" stroke="#999" stroke-width="2"/><rect x="3" y="7" width="11" height="8" rx="1" fill="#a8c0f4" stroke="#7890d0"/></symbol>
    <!-- navigator -->
    <symbol id="folder" viewBox="0 0 14 14"><path d="M.5 2.500l1-1h4l1 1h7v10H.5z" fill="#d8ba28" stroke="#94801c"/><path d="M1 4.500h12V12H1z" fill="url(#gFolder)"/></symbol>
    <symbol id="folderopen" viewBox="0 0 14 14"><path d="M1.500 2h4l1 1h7v9h-12z" fill="#9a8218" stroke="#5c4c08"/><path d="M0 5h11l3 7.500H2z" fill="#dcc030" stroke="#7a6410" stroke-width=".8"/></symbol>
    <symbol id="fdim" viewBox="0 0 14 14"><use href="#folder"/><path d="M4 11l6-6M4 8v3h2M8 5h2v2" fill="none" stroke="#553f00"/></symbol>
    <symbol id="fcom" viewBox="0 0 14 14"><use href="#folder"/><path d="M3 11l3-4h5M3 9v2h2" fill="none" stroke="#553f00"/></symbol>
    <symbol id="fgrid" viewBox="0 0 14 14"><use href="#folder"/><path d="M4.500 4v8M9.500 4v8M2 5.500h10M2 10.500h10" stroke="#a08410"/></symbol>
    <symbol id="fvis" viewBox="0 0 14 14"><use href="#folder"/><circle cx="7" cy="8" r="3" fill="#5a9ad8" stroke="#28508c"/></symbol>
    <symbol id="fback" viewBox="0 0 14 14"><use href="#folder"/><path d="M3 11l1-3h3l1-3h4l-2 6z" fill="#f2f2f2" stroke="#444"/></symbol>
    <symbol id="model" viewBox="0 0 16 16"><path d="M4.500.5h7l3 3v12h-10z" fill="#f2f2f2" stroke="#777"/><path d="M8 5.500h5M8 8.500h5M7 11.500h6M7 13.500h6" stroke="#888"/><path d="M0 6l5-4 5 2-1 5-3 3-2-4z" fill="#6c94c0" stroke="#2d4a6c" stroke-width=".8"/><path d="M2 6l5 3M5 3l3 5" stroke="#b4cce0"/></symbol>
    <symbol id="navdata" viewBox="0 0 16 16"><path d="M3.500 1.500h12v9h-12z" fill="#fff" stroke="#4878c0"/><path d="M3 1.500h13" stroke="#3868c0" stroke-width="3"/><path d="M.5 4.500h6v9h-6z" fill="#f0c820" stroke="#a08010"/><circle cx="9" cy="8.500" r="3.500" fill="#e0ecfa" stroke="#444"/><path d="M11 11l4 4" stroke="#8c5020" stroke-width="2"/></symbol>
    <symbol id="navdisp" viewBox="0 0 16 16"><path d="M.5 3.500h13v12H.5z" fill="#dfe8fc" stroke="#333"/><path d="M3 8h8M3 10.500h8M3 13h8" stroke="#3868c8" stroke-width="1.300"/><use href="#hand"/></symbol>
    <symbol id="navview" viewBox="0 0 16 16"><path d="M9 2l3-1 1 3-4 6-4-2z" fill="#a8c0f0" stroke="#2c50b8" stroke-width="1.300"/><path d="M12 5q2 4-1 7M2 9l7 3M1 14.500h14" fill="none" stroke="#2c50b8" stroke-width="2"/></symbol>
    <symbol id="pin" viewBox="0 0 9 9"><path d="M2 .5h5M2.500.5v5M5.500.5v5M6.500.5v5M1 5.500h7M4.500 6v3" stroke="#666" fill="none"/></symbol>
    <symbol id="close" viewBox="0 0 9 9"><path d="M1 1l7 7M8 1L1 8" stroke="#666" stroke-width="1.200"/></symbol>
    <!-- dialog -->
    <symbol id="pick" viewBox="0 0 16 16"><path d="M2 1l7 5M9 1L2 5" stroke="#c84048" stroke-width="2"/><path d="M6 4l8 7-3 .5 2 4-2 .5-2-4-3 2z" fill="#fff" stroke="#333" stroke-width=".9"/></symbol>
    <symbol id="pick2" viewBox="0 0 16 16"><path d="M4 1l7 5M11 1L4 5" stroke="#c84048" stroke-width="2"/><path d="M8 4l7 7-3 .5 2 4-2 .5-2-4-2 2z" fill="#fff" stroke="#333" stroke-width=".9"/><text x="0" y="15" font-size="12" font-weight="bold" font-family="Liberation Serif">2</text></symbol>
    <symbol id="help" viewBox="0 0 16 16"><path d="M5 13q-5-2-4-6 2-6 8-6 6 1 6 6 0 5-5 6l-6 3 2-3z" fill="#f4f4f8" stroke="#555"/><text x="5" y="12" font-size="13" font-weight="bold" font-family="Liberation Serif" fill="#445a90">?</text></symbol>
    <symbol id="edit" viewBox="0 0 16 16"><path d="M.5.5h12v15H.5z" fill="#fff" stroke="#333"/><path d="M3 3.500h6M3 5.500h6M3 7.500h4M3 9.500h3" stroke="#666"/><path d="M14 2l-7 9" stroke="#e8c020" stroke-width="3"/><path d="M7 11l-2 3" stroke="#222" stroke-width="1.500"/></symbol>
    <symbol id="units" viewBox="0 0 18 16"><path d="M1 0h16v5H1z" fill="#58c040"/><path d="M2.500 5V3M4.500 5V3M6.500 5V3M8.500 5V3M10.500 5V3M12.500 5V3M14.500 5V3" stroke="#2c7020"/><text x="1" y="14" font-size="10" font-style="italic" font-weight="bold" font-family="Liberation Serif" fill="#223">0.00</text><path d="M8 15.500h10" stroke="#2040a0"/></symbol>
  </svg>

  <div class="app">
    <header class="titlebar">
      <svg class="ico"><use href="#app"/></svg>
      <h1>RFEM 5.18.02 x64 Developer - [004588-model-file*]</h1>
      <div class="win-buttons">
        <button aria-label="Minimize"><svg viewBox="0 0 10 10"><path d="M0 5.500h10"/></svg></button>
        <button aria-label="Maximize"><svg viewBox="0 0 10 10"><path d="M.5.5h9v9h-9z"/></svg></button>
        <button aria-label="Close"><svg viewBox="0 0 10 10"><path d="M0 0l10 10M10 0L0 10"/></svg></button>
      </div>
    </header>

    <nav class="menubar">
      <span class="grip"></span>
      <svg class="ico"><use href="#rfem"/></svg>
      <a href="#"><u>F</u>ile</a>
      <a href="#"><u>E</u>dit</a>
      <a href="#"><u>V</u>iew</a>
      <a href="#"><u>I</u>nsert</a>
      <a href="#"><u>C</u>alculate</a>
      <a href="#"><u>R</u>esults</a>
      <a href="#"><u>T</u>ools</a>
      <a href="#">Ta<u>b</u>le</a>
      <a href="#"><u>O</u>ptions</a>
      <a href="#">Developers</a>
      <a href="#"><u>A</u>dd-on Modules</a>
      <a href="#"><u>W</u>indow</a>
      <a href="#"><u>H</u>elp</a>
      <div class="mdi-buttons">
        <button aria-label="Minimize document"><svg viewBox="0 0 9 9"><path d="M1 8h7"/></svg></button>
        <button aria-label="Restore document"><svg viewBox="0 0 9 9"><path d="M2.500 2V.5h6v5H7M.5 2.500h6v5h-6zM0 3.500h7"/></svg></button>
        <button aria-label="Close document"><svg viewBox="0 0 9 9"><path d="M1 1l7 7M8 1L1 8"/></svg></button>
      </div>
    </nav>

    <div class="toolrow">
      <div class="toolbar">
        <span class="grip"></span>
        <button class="tool" title="New"><svg><use href="#new"/></svg></button>
        <button class="tool" title="Open"><svg><use href="#open"/></svg></button>
        <button class="tool" title="Project Manager"><svg><use href="#cabo"/></svg></button>
        <button class="tool" title="Block Manager"><svg><use href="#cabb"/></svg></button>
        <button class="tool" title="Save"><svg><use href="#save"/></svg></button>
        <button class="tool" title="Report"><svg><use href="#clip"/></svg></button>
        <button class="tool" title="Print"><svg><use href="#print"/></svg></button>
        <button class="tool" title="Preview"><svg><use href="#preview"/></svg></button>
        <span class="sep"></span>
        <button class="tool" title="Undo"><svg><use href="#undo"/></svg></button>
        <button class="tool" title="Redo"><svg><use href="#redo"/></svg></button>
        <span class="sep"></span>
        <button class="tool" title="Select by Rhomboid"><svg><use href="#selpoly"/></svg></button>
        <button class="tool" title="Select by Ellipse"><svg><use href="#selell"/></svg></button>
        <button class="tool" title="Select by Annulus"><svg><use href="#selring"/></svg></button>
        <button class="tool" title="Add to Selection"><svg><use href="#selrect"/></svg></button>
        <button class="tool" title="Special Selection"><svg><use href="#selwin"/></svg></button>
        <span class="sep"></span>
        <button class="tool on" title="Navigator"><svg><use href="#list"/></svg></button>
        <button class="tool on" title="Tables"><svg><use href="#table"/></svg></button>
        <span class="sep"></span>
        <button class="tool" title="New Load Case"><svg><use href="#starload"/></svg></button>
        <select class="case-select" aria-label="Load case"><option></option></select>
        <button class="tool" title="Previous"><svg><use href="#prev"/></svg></button>
        <button class="tool" title="Next"><svg><use href="#next"/></svg></button>
        <button class="tool off" title="Show Loads"><svg><use href="#eyeload"/></svg></button>
        <button class="tool off" title="Show Load Values"><svg><use href="#xxload"/></svg></button>
        <button class="tool off" title="Show Results"><svg><use href="#eyediag"/></svg></button>
        <button class="tool off" title="Show Result Values"><svg><use href="#xxdiag"/></svg></button>
        <span class="sep"></span>
        <button class="tool" title="Check"><svg><use href="#glasses"/></svg></button>
        <button class="tool" title="Calculation Parameters"><svg><use href="#abacuswin"/></svg></button>
        <button class="tool off" title="Calculate All"><svg><use href="#abacus"/></svg></button>
      </div>
      <div class="toolbar">
        <span class="grip"></span>
        <button class="tool" title="Grid Settings"><svg><use href="#handgrid"/></svg></button>
        <button class="tool" title="Snap"><svg><use href="#snap"/></svg></button>
        <button class="tool on" title="Work Plane XY"><svg><use href="#wpa"/></svg></button>
        <button class="tool" title="Work Plane YZ"><svg><use href="#wpb"/></svg></button>
        <button class="tool" title="Work Plane XZ"><svg><use href="#wpc"/></svg></button>
        <button class="tool" title="Mesh"><svg><use href="#redgrid"/></svg></button>
        <button class="tool" title="Coordinate System"><svg><use href="#wrench"/></svg></button>
        <span class="sep"></span>
        <button class="tool" title="Move"><svg><use href="#movenode"/></svg></button>
        <button class="tool" title="Rotate"><svg><use href="#rotate"/></svg></button>
        <button class="tool" title="Mirror"><svg><use href="#mirror"/></svg></button>
        <button class="tool" title="Scale"><svg><use href="#scale"/></svg></button>
        <button class="tool" title="Info"><svg><use href="#info"/></svg></button>
        <button class="tool" title="Settings"><svg><use href="#gearwin"/></svg></button>
        <button class="tool" title="Modules"><svg><use href="#gears"/></svg></button>
      </div>
      <div class="toolbar">
        <span class="grip"></span>
        <button class="tool" title="Import"><svg><use href="#picdown"/></svg></button>
        <button class="tool" title="Export"><svg><use href="#picup"/></svg></button>
        <button class="tool" title="Import File"><svg><use href="#pdfdown"/></svg></button>
        <button class="tool" title="Export File"><svg><use href="#pdfup"/></svg></button>
      </div>
    </div>

    <div class="toolrow">
      <div class="toolbar">
        <span class="grip"></span>
        <button class="tool drop" title="New Node"><svg><use href="#stnode"/></svg></button>
        <button class="tool" title="New Line"><svg><use href="#stline"/></svg></button>
        <button class="tool drop" title="New Member"><svg><use href="#stmember"/></svg></button>
        <button class="tool drop" title="New Polyline"><svg><use href="#stpoly"/></svg></button>
        <span class="sep"></span>
        <button class="tool" title="Nodal Support"><svg><use href="#stsup"/></svg></button>
        <button class="tool off" title="Line Support"><svg><use href="#stsups"/></svg></button>
        <button class="tool off" title="Surface Support"><svg><use href="#stfound"/></svg></button>
        <span class="sep"></span>
        <button class="tool drop" title="Dimension"><svg><use href="#dim"/></svg></button>
        <button class="tool" title="Comment"><svg><use href="#xxnote"/></svg></button>
        <button class="tool" title="Guideline"><svg><use href="#stgrid"/></svg></button>
        <span class="sep"></span>
        <button class="tool drop" title="New Surface"><svg><use href="#stsurf"/></svg></button>
        <button class="tool drop" title="New Opening"><svg><use href="#stopening"/></svg></button>
        <button class="tool drop" title="Intersection"><svg><use href="#intersect"/></svg></button>
        <button class="tool" title="Solid"><svg><use href="#solid"/></svg></button>
        <button class="tool drop" title="New Solid"><svg><use href="#stsolid"/></svg></button>
        <span class="sep"></span>
        <button class="tool drop" title="Connect"><svg><use href="#connect"/></svg></button>
        <button class="tool" title="Nodal Load"><svg><use href="#stnload"/></svg></button>
        <button class="tool off" title="Member Load"><svg><use href="#stmload"/></svg></button>
        <button class="tool off" title="Line Load"><svg><use href="#stmload"/></svg></button>
        <button class="tool off" title="Surface Load"><svg><use href="#stsload"/></svg></button>
        <button class="tool drop" title="Solid Load"><svg><use href="#stvload"/></svg></button>
      </div>
      <div class="toolbar">
        <span class="grip"></span>
        <button class="tool" title="Pan"><svg><use href="#handgear"/></svg></button>
        <button class="tool" title="Zoom Window"><svg><use href="#zoomwin"/></svg></button>
        <button class="tool" title="Show All"><svg><use href="#zoomx"/></svg></button>
        <button class="tool" title="Isometric"><svg><use href="#cube"/></svg></button>
        <button class="tool" title="Perspective"><svg><use href="#cubes"/></svg></button>
        <span class="sep"></span>
        <button class="tool" title="View X"><svg><use href="#vx"/></svg></button>
        <button class="tool" title="View Y"><svg><use href="#vy"/></svg></button>
        <button class="tool" title="View Z"><svg><use href="#vz"/></svg></button>
        <button class="tool drop" title="View -X"><svg><use href="#vmx"/></svg></button>
        <button class="tool drop" title="Visibility"><svg><use href="#micro"/></svg></button>
        <span class="sep"></span>
        <button class="tool drop" title="Rendering"><svg><use href="#block"/></svg></button>
      </div>
      <div class="toolbar">
        <span class="grip"></span>
        <button class="tool off" title="Deformation"><svg><use href="#frame"/></svg></button>
        <button class="tool off" title="Animation"><svg><use href="#cam"/></svg></button>
        <span class="sep"></span>
        <button class="tool off" title="Member Results"><svg><use href="#ibeam"/></svg></button>
        <button class="tool off" title="Surface Results"><svg><use href="#contour"/></svg></button>
        <button class="tool off" title="Solid Results"><svg><use href="#contcube"/></svg></button>
        <button class="tool off" title="Reactions"><svg><use href="#garrows"/></svg></button>
        <button class="tool off" title="Sections"><svg><use href="#wedge"/></svg></button>
        <button class="tool drop" title="Panels"><svg><use href="#four"/></svg></button>
        <button class="tool off" title="Result Diagrams"><svg><use href="#isin"/></svg></button>
        <button class="tool off" title="Result Tables"><svg><use href="#tables"/></svg></button>
        <span class="sep"></span>
        <button class="tool off" title="Printout Report"><svg><use href="#report"/></svg></button>
        <button class="tool drop" title="Wizard"><svg><use href="#wand"/></svg></button>
        <button class="tool drop" title="Colors"><svg><use href="#colors"/></svg></button>
      </div>
    </div>

    <div class="workspace">
      <aside class="navigator">
        <div class="panel-head">
          <h2>Project Navigator - Data</h2>
          <button aria-label="Pin"><svg><use href="#pin"/></svg></button>
          <button aria-label="Close"><svg><use href="#close"/></svg></button>
        </div>
        <div class="tree">
          <div class="root"><svg><use href="#rfem"/></svg>RFEM</div>
          <ul>
            <li>
              <div class="node top"><button class="exp">−</button><svg><use href="#model"/></svg><b>004588-model-file*</b></div>
              <ul>
                <li><div class="node"><button class="exp">+</button><svg><use href="#folder"/></svg>Model Data</div></li>
                <li><div class="node"><button class="exp">+</button><svg><use href="#folder"/></svg>Load Cases and Combinations</div></li>
                <li><div class="node"><svg><use href="#folder"/></svg>Loads</div></li>
                <li><div class="node"><svg><use href="#folder"/></svg>Results</div></li>
                <li><div class="node"><svg><use href="#folder"/></svg>Sections</div></li>
                <li><div class="node"><svg><use href="#folder"/></svg>Average Regions</div></li>
                <li><div class="node"><svg><use href="#folder"/></svg>Printout Reports</div></li>
                <li>
                  <div class="node"><button class="exp">−</button><svg><use href="#folderopen"/></svg>Guide Objects</div>
                  <ul>
                    <li><div class="node"><svg><use href="#fdim"/></svg>Dimensions</div></li>
                    <li><div class="node"><button class="exp">+</button><svg><use href="#fcom"/></svg>Comments</div></li>
                    <li><div class="node"><svg><use href="#folder"/></svg>User-Defined Coordinate Systems</div></li>
                    <li><div class="node"><svg><use href="#fgrid"/></svg>Guidelines</div></li>
                    <li><div class="node"><svg><use href="#fgrid"/></svg>Line Grid</div></li>
                    <li><div class="node"><svg><use href="#fvis"/></svg>Visual Objects</div></li>
                    <li><div class="node"><svg><use href="#fback"/></svg>Background Layers</div></li>
                  </ul>
                </li>
                <li><div class="node"><button class="exp">+</button><svg><use href="#folder"/></svg>Add-on Modules</div></li>
                <li><div class="node"><button class="exp">+</button><svg><use href="#folder"/></svg>Stand-Alone Programs</div></li>
              </ul>
            </li>
          </ul>
        </div>
        <div class="nav-tabs">
          <button class="active"><svg><use href="#navdata"/></svg>Data</button>
          <button><svg><use href="#navdisp"/></svg>Display</button>
          <button><svg><use href="#navview"/></svg>Views</button>
        </div>
      </aside>

      <main class="content">
        <div class="viewport">
          <svg class="scene">
            <defs>
              <pattern id="points" x="2" y="24" width="65" height="65" patternUnits="userSpaceOnUse"><path d="M0 0h1v1H0z" fill="#000"/></pattern>
            </defs>
            <rect width="100%" height="100%" fill="url(#points)"/>
            <g shape-rendering="crispEdges">
              <rect x="848" width="1" height="100%" fill="#c4c4c4"/>
              <rect x="197" width="1" height="100%" fill="#0c6464"/>
              <rect y="154" width="100%" height="1" fill="#0c6464"/>
            </g>
            <path d="M233 119l30-29.500h12M437 437l23-22.500h11" fill="none" stroke="#1010a0"/>
            <text x="276" y="94" class="coord">(X | Y | Z) = (0 | 0 | 0)</text>
            <text x="471" y="419" class="coord">(X | Y | Z) = (3 | 5 | 0)</text>
            <path d="M56 518h32" stroke="#f00" stroke-width="2"/><path d="M86 515l10 3-10 3z" fill="#b00000"/>
            <path d="M55 521v30" stroke="#0f0" stroke-width="2"/><path d="M52 549h6l-3 10z" fill="#00a800"/>
            <path d="M52 515h6v6h-6z" fill="#00f"/>
            <text x="102" y="522" class="axis" fill="#f00">X</text>
            <text x="52" y="572" class="axis" fill="#0e0">Y</text>
          </svg>
        </div>

        <section class="tables">
          <div class="panel-head">
            <h2>1.1 Nodes</h2>
            <button aria-label="Pin"><svg><use href="#pin"/></svg></button>
            <button aria-label="Close"><svg><use href="#close"/></svg></button>
          </div>
          <div class="table-tools">
            <button class="tool on" title="Graphic Input"><svg><use href="#gtri"/></svg></button>
            <button class="tool" title="Insert Row"><svg><use href="#gadd"/></svg></button>
            <button class="tool off" title="Loads"><svg><use href="#gdown"/></svg></button>
            <button class="tool off" title="Results"><svg><use href="#gdiag"/></svg></button>
            <button class="tool off" title="Dynamics"><svg><use href="#gwave"/></svg></button>
            <span class="sep"></span>
            <button class="tool" title="Previous Table"><svg><use href="#gleft"/></svg></button>
            <button class="tool" title="Next Table"><svg><use href="#gright"/></svg></button>
            <span class="sep"></span>
            <button class="tool on" title="Jump to Graphic"><svg><use href="#retr"/></svg></button>
            <button class="tool on" title="Jump to Table"><svg><use href="#retl"/></svg></button>
            <button class="tool off" title="Synchronize"><svg><use href="#sync"/></svg></button>
            <span class="sep"></span>
            <button class="tool off" title="Add"><svg><use href="#gplus"/></svg></button>
            <button class="tool off" title="Multiply"><svg><use href="#gmul"/></svg></button>
            <button class="tool off" title="Divide"><svg><use href="#gdiv"/></svg></button>
            <span class="sep"></span>
            <button class="tool off" title="Delete Contents"><svg><use href="#gx"/></svg></button>
            <span class="sep"></span>
            <button class="tool" title="Delete Row"><svg><use href="#rowx"/></svg></button>
            <button class="tool" title="Row Left"><svg><use href="#rowl"/></svg></button>
            <button class="tool" title="Row Right"><svg><use href="#rowr"/></svg></button>
            <span class="sep"></span>
            <button class="tool" title="Highlight"><svg><use href="#ytab"/></svg></button>
            <button class="tool off" title="Filter"><svg><use href="#btab"/></svg></button>
            <span class="sep"></span>
            <button class="tool off" title="Notes"><svg><use href="#note"/></svg></button>
            <span class="sep"></span>
            <button class="tool" title="Table Settings"><svg><use href="#handlist"/></svg></button>
            <button class="tool" title="Check"><svg><use href="#glasses"/></svg></button>
            <button class="tool" title="Excel"><svg><use href="#excel"/></svg></button>
            <button class="tool" title="Calculator"><svg><use href="#calc"/></svg></button>
            <span class="sep"></span>
            <button class="tool" title="Parameters"><svg><use href="#abeq"/></svg></button>
            <button class="tool" title="Formula"><svg><use href="#fx"/></svg></button>
            <button class="tool" title="Delete Formula"><svg><use href="#fxx"/></svg></button>
            <span class="sep"></span>
            <button class="tool" title="Lock"><svg><use href="#lock"/></svg></button>
          </div>
          <div class="grid-wrap">
            <table class="grid">
              <colgroup><col class="w-no"><col class="w-a"><col class="w-b"><col class="w-c"><col class="w-d"><col class="w-d"><col class="w-d"><col></colgroup>
              <thead>
                <tr class="letters"><th rowspan="3" class="corner">Node<br>No.</th><th class="sel">A</th><th>B</th><th>C</th><th>D</th><th>E</th><th>F</th><th>G</th></tr>
                <tr class="names"><th></th><th>Reference</th><th>Coordinate</th><th colspan="3">Node Coordinates</th><th></th></tr>
                <tr class="names last"><th>Node Type</th><th>Node</th><th>System</th><th>X [ft]</th><th>Y [ft]</th><th>Z [ft]</th><th>Comment</th></tr>
              </thead>
              <tbody>
                <tr><th class="sel">1</th><td class="focus">Standard</td><td class="mid">0</td><td><u>C</u>artesian</td><td class="num">0.00</td><td class="num">0.00</td><td class="num">0.00</td><td></td></tr>
                <tr><th>2</th><td>Standard</td><td class="mid">0</td><td><u>C</u>artesian</td><td class="num">9.84</td><td class="num">16.40</td><td class="num">0.00</td><td></td></tr>
              </tbody>
            </table>
            <div class="scroll">
              <button aria-label="Scroll up"><svg viewBox="0 0 8 8"><path d="M0 6l4-4 4 4"/></svg></button>
              <span class="thumb"></span>
              <button aria-label="Scroll down"><svg viewBox="0 0 8 8"><path d="M0 2l4 4 4-4"/></svg></button>
            </div>
          </div>
          <div class="sheet-tabs">
            <button class="active">Nodes</button><button>Lines</button><button>Materials</button><button>Surfaces</button><button>Solids</button><button>Openings</button><button>Nodal Supports</button><button>Line Supports</button><button>Surface Supports</button><button>Line Hinges</button><button>Cross-Sections</button><button>Member Hinges</button><button>Member Eccentricities</button>
            <div class="sheet-nav">
              <button disabled aria-label="First"><svg viewBox="0 0 9 8"><path d="M1 0h1v8H1zM8 0v8L4 4z"/></svg></button>
              <button disabled aria-label="Previous"><svg viewBox="0 0 9 8"><path d="M7 0v8L3 4z"/></svg></button>
              <button aria-label="Next"><svg viewBox="0 0 9 8"><path d="M3 0v8l4-4z"/></svg></button>
              <button aria-label="Last"><svg viewBox="0 0 9 8"><path d="M1 0v8l4-4zM7 0h2v8H7z"/></svg></button>
            </div>
          </div>
        </section>
      </main>
    </div>

    <footer class="statusbar">
      <div class="status-text"></div>
      <button>SNAP</button>
      <button>GRID</button>
      <button>CARTES</button>
      <button>OSNAP</button>
      <button>GLINES</button>
      <button>DXF</button>
      <div class="cell fill"></div>
      <div class="cell c1"></div>
      <div class="cell"></div>
      <div class="cell"></div>
      <div class="cell c2"><svg viewBox="0 0 10 10"><path d="M8 0h2v2H8zM4 4h2v2H4zM8 4h2v2H8zM0 8h2v2H0zM4 8h2v2H4zM8 8h2v2H8z"/></svg></div>
    </footer>
  </div>

  <!-- New Guideline window -->
  <form class="dialog" role="dialog" aria-labelledby="dlgTitle">
    <div class="dialog-title">
      <h2 id="dlgTitle">New Guideline</h2>
      <button type="button" aria-label="Close"><svg viewBox="0 0 11 11"><path d="M.5.5l10 10M10.500.5l-10 10"/></svg></button>
    </div>
    <div class="dialog-body">
      <div class="top-groups">
        <section class="group no">
          <h3><label for="no"><u>N</u>o.</label></h3>
          <div class="group-body"><input id="no" type="text" value="1"></div>
        </section>
        <section class="group type">
          <h3>Type</h3>
          <div class="group-body radios">
            <label><input type="radio" name="type">II to <u>X</u></label>
            <label><input type="radio" name="type">II to <u>Y</u></label>
            <label><input type="radio" name="type" checked>Bias by <u>2</u> points</label>
            <label><input type="radio" name="type">Bias by <u>a</u>ngle and point</label>
            <label><input type="radio" name="type"><u>P</u>olar</label>
          </div>
        </section>
      </div>
      <section class="group params">
        <h3>Pa<u>r</u>ameters</h3>
        <div class="group-body">
          <div class="coords">
            <label for="x1">x<small>1</small>:</label>
            <div class="spin"><input id="x1" type="text" value="0.00"><button type="button" aria-label="Step"><svg viewBox="0 0 9 12"><path d="M1 4h7L4.500 1zM1 8h7l-3.500 3z"/></svg></button><button type="button" aria-label="More"><svg viewBox="0 0 9 12"><path d="M3 3v6l4-3z"/></svg></button></div>
            <span>[ft]</span>
            <label for="x2">x<small>2</small>:</label>
            <div class="spin"><input id="x2" type="text" value="0.00"><button type="button" aria-label="Step"><svg viewBox="0 0 9 12"><path d="M1 4h7L4.500 1zM1 8h7l-3.500 3z"/></svg></button><button type="button" aria-label="More"><svg viewBox="0 0 9 12"><path d="M3 3v6l4-3z"/></svg></button></div>
            <span>[ft]</span>
            <label for="y1">y<small>1</small>:</label>
            <div class="spin"><input id="y1" type="text" value="0.00"><button type="button" aria-label="Step"><svg viewBox="0 0 9 12"><path d="M1 4h7L4.500 1zM1 8h7l-3.500 3z"/></svg></button><button type="button" aria-label="More"><svg viewBox="0 0 9 12"><path d="M3 3v6l4-3z"/></svg></button></div>
            <span>[ft]</span>
            <label for="y2">y<small>2</small>:</label>
            <div class="spin"><input id="y2" type="text" value="0.00"><button type="button" aria-label="Step"><svg viewBox="0 0 9 12"><path d="M1 4h7L4.500 1zM1 8h7l-3.500 3z"/></svg></button><button type="button" aria-label="More"><svg viewBox="0 0 9 12"><path d="M3 3v6l4-3z"/></svg></button></div>
            <span>[ft]</span>
          </div>
          <div class="picks">
            <button type="button" class="sq first" title="Pick point 1"><svg><use href="#pick"/></svg></button>
            <button type="button" class="sq" title="Pick point 2"><svg><use href="#pick"/></svg></button>
            <button type="button" class="sq" title="Pick both points"><svg><use href="#pick2"/></svg></button>
          </div>
          <label class="check"><input type="checkbox"><span><u>D</u>escription:</span></label>
          <div class="desc">
            <select aria-label="Description" disabled><option>Use guideline number</option></select>
            <svg viewBox="0 0 10 6"><path d="M1 1l4 4 4-4"/></svg>
          </div>
          <div class="highlight"></div>
        </div>
      </section>
      <div class="dialog-foot">
        <button type="button" class="sq" title="Help"><svg><use href="#help"/></svg></button>
        <button type="button" class="sq" title="Comment"><svg><use href="#edit"/></svg></button>
        <button type="button" class="sq focus" title="Units"><svg><use href="#units"/></svg></button>
        <button type="button" class="cmd ok">OK</button>
        <button type="button" class="cmd">Cancel</button>
      </div>
    </div>
  </form>
</body>
</html>
```
FILE: styles.css
```css
* {
  box-sizing: border-box;
}
body {
  margin: 0;
  font-family: "Open Sans", "Noto Sans", sans-serif;
  font-size: 12px;
  color: #000;
  overflow: hidden;
}
button, input, select {
  font: inherit;
  color: inherit;
  margin: 0;
  padding: 0;
}
button {
  border: 0;
  background: none;
}
h1, h2, h3 {
  margin: 0;
  font-weight: normal;
}
ul {
  list-style: none;
  margin: 0;
  padding: 0;
}
.gradients {
  position: absolute;
  width: 0;
  height: 0;
}
.sprite {
  display: none;
}
.app {
  display: flex;
  flex-direction: column;
  height: 100vh;
  background: #cfd3dc;
  border: 1px solid #4d4d52;
}

/* title and menu */
.titlebar {
  display: flex;
  align-items: center;
  height: 30px;
  background: #fff;
  padding-left: 8px;
}
.titlebar .ico {
  width: 16px;
  height: 16px;
  margin-right: 5px;
}
.titlebar h1 {
  flex: 1;
  font-size: 11px;
  color: #858585;
}
.win-buttons {
  display: flex;
}
.win-buttons button {
  width: 46px;
  height: 30px;
}
.win-buttons svg {
  width: 10px;
  height: 10px;
  fill: none;
  stroke: #8a8a8a;
}
.menubar {
  display: flex;
  align-items: center;
  gap: 16px;
  height: 25px;
  padding-bottom: 1px;
  font-size: 11px;
}
.menubar .ico {
  width: 16px;
  height: 14px;
  margin: 0 -6px 0 -16px;
}
.menubar a {
  color: #3f434c;
  text-decoration: none;
}
.mdi-buttons {
  display: flex;
  gap: 7px;
  align-self: flex-end;
  margin-left: auto;
  margin-right: 4px;
}
.mdi-buttons button {
  width: 9px;
  height: 17px;
}
.mdi-buttons svg {
  width: 9px;
  height: 9px;
  fill: none;
  stroke: #66666c;
  stroke-width: 2;
}
.mdi-buttons button:nth-child(2) svg {
  stroke-width: 1;
}

/* toolbars */
.toolrow {
  display: flex;
  gap: 2px;
  height: 26px;
}
.toolbar {
  display: flex;
  align-items: center;
  height: 25px;
  border-radius: 3px;
  background: linear-gradient(#eef1f8, #e4e8f0 50%, #d6dae3);
  border-bottom: 1px solid #b4b8c2;
}
.toolbar:last-child {
  padding-right: 2px;
}
.grip {
  width: 10px;
  height: 15px;
  background: repeating-linear-gradient(#9a9fab 0 2px, transparent 2px 4px) 4px 0 / 2px 100% no-repeat;
}
.menubar .grip {
  height: 13px;
}
.sep {
  width: 8px;
  height: 14px;
  background: linear-gradient(#a9adb7, #a9adb7) 3px 0 / 1px 100% no-repeat;
}
.tool {
  display: flex;
  align-items: center;
  justify-content: center;
  width: 22px;
  height: 22px;
}
.tool svg {
  width: 16px;
  height: 16px;
  flex: none;
}
.tool.on {
  border: 1px solid #b8935a;
  border-radius: 2px;
  background: linear-gradient(#fdd9a6, #fdb85e 50%, #ffdf90);
}
.tool.off svg {
  opacity: .6;
}
.tool.drop {
  width: 35px;
  justify-content: flex-start;
  padding-left: 3px;
  gap: 7px;
}
.tool.drop::after {
  content: "";
  border: 3px solid transparent;
  border-top-color: #666;
  border-bottom: 0;
}
.case-select {
  width: 216px;
  height: 19px;
  margin: 0 2px;
  border: 1px solid #a0a0a0;
  background: #efefef;
  appearance: none;
  background-image: linear-gradient(45deg, transparent 50%, #777 50%), linear-gradient(-45deg, transparent 50%, #777 50%);
  background-position: 204px 6px, 207px 6px;
  background-size: 3px 3px;
  background-repeat: no-repeat;
}

/* panels */
.workspace {
  flex: 1;
  display: flex;
  min-height: 0;
}
.panel-head {
  display: flex;
  align-items: center;
  gap: 8px;
  height: 20px;
  padding: 0 4px 1px;
  background: #b8bfca;
  border-bottom: 1px solid #a9afba;
}
.panel-head h2 {
  flex: 1;
  font-size: 11px;
  color: #45484f;
}
.panel-head button {
  display: flex;
}
.panel-head svg {
  width: 9px;
  height: 9px;
}
.navigator {
  display: flex;
  flex-direction: column;
  width: 272px;
  flex: none;
  background: #e6eaf4;
}
.tree {
  flex: 1;
  margin: 2px 3px 0;
  border: 1px solid #8c8c8c;
  border-right-color: #eee;
  background: #fbfbf3;
  font-size: 11px;
  line-height: 18px;
  overflow: hidden;
  white-space: nowrap;
}
.tree b {
  font-size: 12px;
}
.root, .node {
  display: flex;
  align-items: center;
  height: 18px;
}
.root {
  padding-left: 3px;
  gap: 5px;
}
.root svg {
  width: 16px;
  height: 13px;
}
.tree > ul {
  margin-left: 2px;
}
.tree ul ul {
  margin-left: 19px;
}
.tree li {
  position: relative;
}
.tree li::before {
  content: "";
  position: absolute;
  left: 9px;
  top: 0;
  bottom: 0;
  border-left: 1px dotted #808080;
}
.tree li:last-child::before {
  bottom: auto;
  height: 10px;
}
.node {
  position: relative;
  padding-left: 22px;
}
.node::before {
  content: "";
  position: absolute;
  left: 10px;
  top: 9px;
  width: 11px;
  border-top: 1px dotted #808080;
}
.node svg {
  width: 14px;
  height: 14px;
  margin-right: 5px;
}
.node.top svg {
  width: 16px;
  height: 16px;
  margin-right: 3px;
}
.exp {
  position: absolute;
  left: 5px;
  top: 5px;
  width: 9px;
  height: 9px;
  border: 1px solid #8c8c8c;
  background: #fff;
  color: #2a4ab0;
  font: bold 9px/7px "Liberation Sans", sans-serif;
}
.nav-tabs {
  display: flex;
  gap: 5px;
  height: 23px;
  padding-left: 4px;
  background: #cfd3dc;
}
.nav-tabs button {
  display: flex;
  align-items: center;
  gap: 1px;
  height: 20px;
  padding: 0 3px 0 2px;
  font-size: 11px;
  color: #44474e;
}
.nav-tabs .active {
  border: 1px solid #f4f7fb;
  border-top: 0;
  border-radius: 0 0 3px 3px;
  background: #dde2ea;
}
.nav-tabs svg {
  width: 16px;
  height: 16px;
}

/* model view */
.content {
  flex: 1;
  display: flex;
  flex-direction: column;
  min-width: 0;
  margin: 0 1px 0 5px;
}
.viewport {
  flex: 1;
  min-height: 0;
  background: #fcfcfc;
  border: 1px solid #6d6d6d;
  border-left-width: 2px;
  border-right-color: #d9d9d9;
  border-bottom-color: #d9d9d9;
}
.scene {
  display: block;
  width: 100%;
  height: 100%;
}
.coord {
  font: bold 11px "Liberation Sans", Arial, sans-serif;
  fill: #000080;
}
.axis {
  font: 9px "Liberation Sans", Arial, sans-serif;
}

/* tables */
.tables {
  flex: none;
  margin-top: 4px;
  background: #f0f0f0;
  border-bottom: 1px solid #a9a9a9;
  padding-bottom: 18px;
  font-family: "Liberation Sans", Arial, sans-serif;
}
.tables .panel-head {
  font-family: "Open Sans", "Noto Sans", sans-serif;
}
.table-tools {
  display: flex;
  align-items: center;
  height: 24px;
  padding-left: 9px;
  background: linear-gradient(#eaeef6, #d3d8e2);
}
.grid-wrap {
  display: flex;
  height: 112px;
  padding: 1px 2px 13px 2px;
  border-top: 2px solid #6d6d6d;
  border-bottom: 2px solid #808080;
}
.grid {
  flex: 1;
  border-collapse: collapse;
  table-layout: fixed;
  font-size: 13px;
  height: 94px;
}
.w-no { width: 53px; }
.w-a { width: 100px; }
.w-b { width: 86px; }
.w-c { width: 108px; }
.w-d { width: 93px; }
.grid th, .grid td {
  padding: 0 4px;
  border: 1px solid #a0a0a0;
  font-weight: normal;
  line-height: 17px;
  height: 19px;
}
.grid td {
  background: #fff;
}
.grid .letters th {
  height: 18px;
  line-height: 16px;
  background: #e1e1e1;
  border-color: #6d6d6d;
}
.grid .letters .sel, .grid tbody .sel {
  background: #0078d7;
}
.grid tbody .sel {
  color: #fff;
}
.grid tbody th {
  background: #e1e1e1;
  border-color: #6d6d6d;
}
.grid .letters .corner {
  background: #e9e9e9;
  padding-top: 14px;
}
.grid .names th {
  background: #f0f0f0;
  border-bottom: 0;
  border-top: 0;
}
.grid .focus {
  outline: 1px dotted #000;
  outline-offset: -1px;
}
.grid .mid {
  text-align: center;
}
.grid .num {
  text-align: right;
}
.scroll {
  display: flex;
  flex-direction: column;
  width: 17px;
  margin-left: 2px;
  border-right: 1px solid #a0a0a0;
}
.scroll button {
  height: 16px;
}
.scroll svg {
  width: 8px;
  height: 8px;
  fill: none;
  stroke: #505050;
  stroke-width: 2;
}
.thumb {
  flex: 1;
  background: #cdcdcd;
}
.sheet-tabs {
  display: flex;
  height: 17px;
  font-size: 11px;
  white-space: nowrap;
}
.sheet-tabs > button {
  padding: 0 3px 0 4px;
  background: #e6e6e6;
  border-right: 1px solid #555;
  border-bottom: 1px solid #555;
  border-radius: 0 0 5px 5px;
}
.sheet-tabs > .active {
  background: #f0f0f0;
}
.sheet-nav {
  display: flex;
  margin-left: auto;
}
.sheet-nav button {
  width: 16px;
  border-right: 1px solid #707070;
  border-bottom: 1px solid #707070;
  border-left: 1px solid #fff;
}
.sheet-nav svg {
  width: 9px;
  height: 8px;
}
.sheet-nav button:disabled {
  fill: #a0a0a0;
}

/* status bar */
.statusbar {
  display: flex;
  gap: 2px;
  height: 20px;
  padding-top: 1px;
  background: linear-gradient(#e4e6ea, #c6cad2 35%, #a9aeb8 50%, #b9bdc6);
  color: #3f434c;
}
.status-text {
  width: 537px;
}
.statusbar button {
  padding: 0 2px;
  font: 11px "Liberation Sans", Arial, sans-serif;
  border: 1px solid #fff;
  border-left-color: #111;
  border-top-color: #111;
}
.cell {
  width: 72px;
  border-left: 1px solid #94979e;
}
.cell.fill { flex: 1; }
.cell.c1 { width: 86px; }
.cell.c2 {
  display: flex;
  justify-content: flex-end;
  align-items: flex-end;
  width: 90px;
}
.cell svg {
  width: 10px;
  height: 10px;
  fill: #777b84;
}

/* dialog */
.dialog {
  position: absolute;
  left: 370px;
  top: 227px;
  width: 347px;
  background: #f0f0f0;
  border: 1px solid #6a6a6a;
  box-shadow: 0 4px 16px rgba(0,0,0,0.35);
  font-family: "Liberation Sans", Arial, sans-serif;
  font-size: 11px;
}
.dialog-title {
  display: flex;
  align-items: center;
  justify-content: space-between;
  height: 25px;
  padding: 0 10px 1px 3px;
  background: #fff;
}
.dialog-title h2 {
  font: 11px "Open Sans", "Noto Sans", sans-serif;
}
.dialog-title svg {
  display: block;
  width: 11px;
  height: 11px;
  stroke: #000;
}
.dialog-body {
  padding: 8px 8px 8px 8px;
}
.top-groups {
  display: flex;
  gap: 8px;
  height: 122px;
}
.group {
  display: flex;
  flex-direction: column;
}
.group h3 {
  height: 16px;
  padding-left: 2px;
  font-size: 11px;
  line-height: 16px;
  color: #1f4474;
  background: #dce6f4;
  clip-path: polygon(0 0, calc(100% - 10px) 0, 100% 10px, 100% 100%, 0 100%);
}
.group-body {
  flex: 1;
  position: relative;
  border: 1px solid #a8a8ec;
  border-top-color: #fff;
  border-left-color: #dce6f4;
  background: #f0f4fa;
  padding: 3px 2px;
}
.group.no { width: 52px; }
.group.type { flex: 1; }
.group input[type="text"] {
  font-size: 12px;
  text-align: right;
}
.group.no input {
  width: 46px;
  height: 20px;
  padding-right: 2px;
  border: 1px solid #7a7a7a;
  background: #fff;
}
.radios {
  display: flex;
  flex-direction: column;
  justify-content: space-between;
  padding: 7px 2px 6px;
}
.radios label, .check {
  display: flex;
  align-items: center;
  white-space: pre;
}
.radios input {
  appearance: none;
  width: 13px;
  height: 13px;
  margin-right: 3px;
  border: 1px solid #333;
  border-radius: 50%;
  background: #fff;
}
.radios input:checked {
  background: radial-gradient(#333 0 3px, #fff 4px);
}
.params {
  margin-top: 10px;
  height: 159px;
}
.params .group-body {
  padding: 6px 2px;
}
.coords {
  display: grid;
  grid-template-columns: 21px 83px 68px 21px 84px 1fr;
  grid-auto-rows: 20px;
  row-gap: 4px;
  align-items: center;
}
.coords label {
  font-size: 12px;
}
.coords small {
  font-size: 10px;
}
.coords span {
  padding-left: 5px;
}
.spin {
  display: flex;
  height: 20px;
  padding-right: 1px;
  border: 1px solid #7b9ebd;
  background: #fff;
}
.spin input {
  flex: 1;
  min-width: 0;
  padding-right: 1px;
  border: 0;
  background: none;
}
.spin button {
  display: flex;
  align-items: center;
  justify-content: center;
  width: 12px;
  height: 16px;
  margin: 1px 0 0 1px;
  border: 1px solid #b4b4b4;
  background: #f0f0f0;
}
.spin svg {
  width: 9px;
  height: 12px;
  flex: none;
}
.picks {
  display: flex;
  gap: 6px;
  margin: 5px 0 0 80px;
}
.picks .first {
  margin-right: 142px;
}
.sq {
  display: flex;
  align-items: center;
  justify-content: center;
  width: 25px;
  height: 21px;
  border: 1px solid #adadad;
  background: #e1e1e1;
}
.sq svg {
  width: 16px;
  height: 16px;
}
.sq.focus {
  border: 2px solid #0078d7;
}
.sq.focus svg {
  width: 18px;
}
.check {
  margin-top: 13px;
}
.check input {
  appearance: none;
  width: 13px;
  height: 13px;
  margin-right: 3px;
  border: 1px solid #333;
  background: #fff;
}
.desc {
  display: flex;
  align-items: center;
  width: 278px;
  height: 21px;
  margin-top: 6px;
  padding-right: 4px;
  border: 1px solid #ccc;
  background: #fff;
}
.desc select {
  flex: 1;
  height: 15px;
  margin: 0 6px 0 2px;
  border: 0;
  appearance: none;
  background: #f0f0f0;
  color: #6d6d6d;
  opacity: 1;
}
.desc svg {
  width: 10px;
  height: 6px;
  fill: none;
  stroke: #a0a0a0;
}
.highlight {
  position: absolute;
  left: -3px;
  top: -1px;
  width: 305px;
  height: 57px;
  border: 3px solid #a51518;
  box-shadow: 3px 3px 4px rgba(0,0,0,0.4), inset 3px 3px 4px rgba(0,0,0,0.35);
  pointer-events: none;
}
.dialog-foot {
  display: flex;
  gap: 10px;
  margin-top: 8px;
  padding-top: 12px;
  border-top: 1px solid #a0a0a0;
}
.cmd {
  width: 73px;
  height: 21px;
  border: 1px solid #adadad;
  background: #e1e1e1;
}
.cmd.ok {
  margin-left: auto;
}
```
